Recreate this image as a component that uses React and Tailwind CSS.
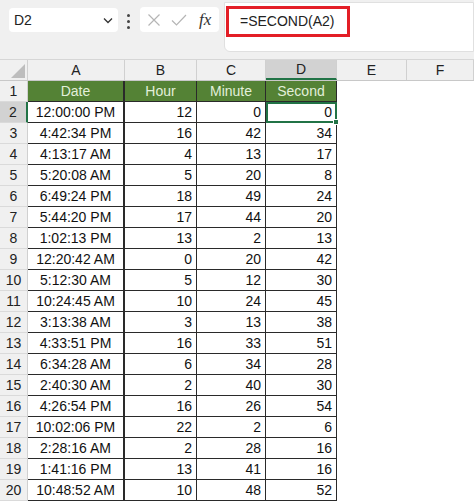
import React from 'react';

const rows = [
  ['12:00:00 PM', 12, 0, 0],
  ['4:42:34 PM', 16, 42, 34],
  ['4:13:17 AM', 4, 13, 17],
  ['5:20:08 AM', 5, 20, 8],
  ['6:49:24 PM', 18, 49, 24],
  ['5:44:20 PM', 17, 44, 20],
  ['1:02:13 PM', 13, 2, 13],
  ['12:20:42 AM', 0, 20, 42],
  ['5:12:30 AM', 5, 12, 30],
  ['10:24:45 AM', 10, 24, 45],
  ['3:13:38 AM', 3, 13, 38],
  ['4:33:51 PM', 16, 33, 51],
  ['6:34:28 AM', 6, 34, 28],
  ['2:40:30 AM', 2, 40, 30],
  ['4:26:54 PM', 16, 26, 54],
  ['10:02:06 PM', 22, 2, 6],
  ['2:28:16 AM', 2, 28, 16],
  ['1:41:16 PM', 13, 41, 16],
  ['10:48:52 AM', 10, 48, 52],
];

const cols = [
  { key: 'A', w: 'w-[97px]' },
  { key: 'B', w: 'w-[72px]' },
  { key: 'C', w: 'w-[69px]' },
  { key: 'D', w: 'w-[71px]' },
  { key: 'E', w: 'w-[70px]' },
  { key: 'F', w: 'w-[67px]' },
];

const TopBar = () => (
  <div className="h-[60px] bg-[#f0f0f0] border-b border-[#d6d6d6] flex items-start relative">
    <div className="mt-[8px] ml-[9px] w-[109px] h-[24px] bg-white rounded-[4px] flex items-center justify-between px-[5px] text-[14px] text-[#222]">
      <span>D2</span>
      <svg width="10" height="7" viewBox="0 0 10 7">
        <path d="M1 1.5 L5 5.5 L9 1.5" fill="none" stroke="#333" strokeWidth="1.3" />
      </svg>
    </div>
    <div className="mt-[14px] ml-[9px] flex flex-col gap-[3px]">
      <div className="w-[3px] h-[3px] rounded-full bg-[#444]" />
      <div className="w-[3px] h-[3px] rounded-full bg-[#444]" />
      <div className="w-[3px] h-[3px] rounded-full bg-[#444]" />
    </div>
    <div className="mt-[7px] ml-[10px] w-[79px] h-[25px] bg-white rounded-[4px] flex items-center pl-[7px] gap-[10px]">
      <svg width="14" height="14" viewBox="0 0 14 14">
        <path d="M1.5 1.5 L12.5 12.5 M12.5 1.5 L1.5 12.5" stroke="#b5b5b5" strokeWidth="1.2" />
      </svg>
      <svg width="16" height="14" viewBox="0 0 16 14">
        <path d="M1 7.5 L5.5 12 L15 2" fill="none" stroke="#b5b5b5" strokeWidth="1.2" />
      </svg>
      <span className="ml-[2px] text-[17px] italic text-[#333] leading-none" style={{ fontFamily: '"Liberation Serif", serif' }}>fx</span>
    </div>
    <div className="absolute left-[224px] top-[2px] right-0 h-[50px] bg-white rounded-bl-[6px] border border-[#e0e0e0]">
      <div className="ml-[1px] mt-[3px] w-[124px] h-[31px] border-[3px] border-[#e31e26] flex items-center pl-[11px] text-[14px] text-[#222]">
        =SECOND(A2)
      </div>
    </div>
  </div>
);

const HeaderRow = () => (
  <div className="flex h-[21px] bg-[#f0f0f0] border-b border-[#c8c8c8]">
    <div className="w-[28px] border-r border-[#d0d0d0] relative">
      <div className="absolute right-[2px] bottom-[2px] w-0 h-0 border-l-[14px] border-l-transparent border-b-[14px] border-b-[#bdbdbd]" />
    </div>
    {cols.map(c => (
      <div
        key={c.key}
        className={`${c.w} flex items-center justify-center text-[14px] text-[#222] border-r border-[#d0d0d0] ${c.key === 'D' ? 'bg-[#d2d2d2] border-b-2 border-b-[#217346]' : ''}`}
      >
        {c.key}
      </div>
    ))}
  </div>
);

const RowHead = ({ n, active }) => (
  <div className={`w-[28px] flex items-center justify-center text-[14px] text-[#222] border-b border-[#dadada] ${active ? 'bg-[#d2d2d2] border-r-2 border-r-[#217346]' : 'bg-[#f0f0f0] border-r border-r-[#d0d0d0]'}`}>
    {n}
  </div>
);

export default function App() {
  return (
    <div className="w-[474px] h-[502px] overflow-hidden bg-white" style={{ fontFamily: '"Liberation Sans", Arial, sans-serif' }}>
      <TopBar />
      <HeaderRow />
      <div className="flex h-[21px]">
        <RowHead n={1} />
        {['Date', 'Hour', 'Minute', 'Second'].map((t, i) => (
          <div
            key={t}
            className={`${cols[i].w} bg-[#548235] text-[#e2efda] text-[14px] flex items-center justify-center border-r border-b border-[#2a2a2a] ${i === 0 ? 'border-r-2' : ''}`}
          >
            {t}
          </div>
        ))}
      </div>
      {rows.map((r, idx) => (
        <div key={idx} className="flex h-[21px]">
          <RowHead n={idx + 2} active={idx === 0} />
          <div className="w-[97px] flex items-center justify-center text-[14px] text-[#111] border-r-2 border-b border-[#2a2a2a]">
            {r[0]}
          </div>
          <div className="w-[72px] flex items-center justify-end pr-[4px] text-[14px] text-[#111] border-r border-b border-[#2a2a2a]">
            {r[1]}
          </div>
          <div className="w-[69px] flex items-center justify-end pr-[4px] text-[14px] text-[#111] border-r border-b border-[#2a2a2a]">
            {r[2]}
          </div>
          {idx === 0 ? (
            <div className="w-[71px] relative flex items-center justify-end pr-[3px] text-[14px] text-[#111] border-2 border-[#217346]">
              {r[3]}
              <div className="absolute -right-[4px] -bottom-[4px] w-[6px] h-[6px] bg-[#217346] border border-white" />
            </div>
          ) : (
            <div className="w-[71px] flex items-center justify-end pr-[4px] text-[14px] text-[#111] border-r border-b border-[#2a2a2a]">
              {r[3]}
            </div>
          )}
          <div className="w-[70px]" />
          <div className="w-[67px]" />
        </div>
      ))}
    </div>
  );
}
